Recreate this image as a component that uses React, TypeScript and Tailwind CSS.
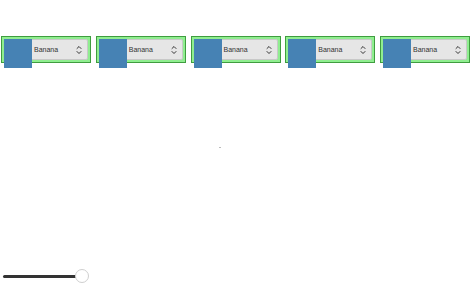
import React from "react";

function Chevrons() {
  return (
    <svg width="6" height="10" viewBox="0 0 6 10" fill="none" stroke="#333" strokeWidth="1" strokeLinecap="round" strokeLinejoin="round">
      <path d="M1 3.5 L3 1.5 L5 3.5" />
      <path d="M1 6.5 L3 8.5 L5 6.5" />
    </svg>
  );
}

function Card() {
  return (
    <div className="relative flex h-[27px] w-[90px] shrink-0 border border-[#3f9d3f] bg-[#90ee90] p-[2px]">
      <div className="relative z-10 -mr-[4px] h-[29px] w-[28px] shrink-0 bg-[#4682b4]" />
      <div className="flex h-[21px] flex-1 items-center justify-between rounded-[2px] border border-[#c8c8c8] bg-[#e6e6e6] pl-[5px] pr-[5px]">
        <span className="text-[7px] leading-none text-[#333]" style={{ fontFamily: '"Liberation Sans", Arial, sans-serif' }}>
          Banana
        </span>
        <Chevrons />
      </div>
    </div>
  );
}

export default function App() {
  return (
    <div className="relative h-[289px] w-[474px] bg-white" style={{ fontFamily: '"Liberation Sans", Arial, sans-serif' }}>
      <div className="flex gap-[4.75px] pl-[1px] pt-[36px]">
        <Card />
        <Card />
        <Card />
        <Card />
        <Card />
      </div>
      <div className="absolute left-[219px] top-[147px] h-[1px] w-[2px] bg-[#bbb]" />
      <div className="absolute left-[3px] top-[269px] flex h-[14px] w-[86px] items-center">
        <div className="h-[3px] w-[75px] rounded-full bg-[#333]" />
        <div className="-ml-[3px] h-[14px] w-[14px] rounded-full border border-[#cfcfcf] bg-white" />
      </div>
    </div>
  );
}
